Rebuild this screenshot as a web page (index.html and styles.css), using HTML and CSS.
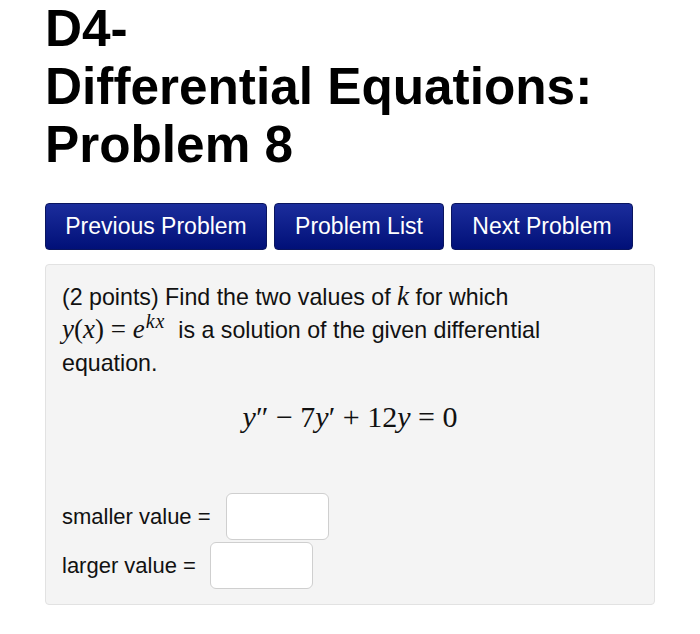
FILE: index.html
```html
<!DOCTYPE html>
<html>
<head>
<meta charset="utf-8">
<link rel="stylesheet" href="styles.css">
</head>
<body>
<h1 class="title">D4-<br>Differential Equations:<br>Problem 8</h1>
<div class="nav">
  <a class="btn btn-prev">Previous Problem</a>
  <a class="btn btn-list">Problem List</a>
  <a class="btn btn-next">Next Problem</a>
</div>
<div class="panel">
  <p class="intro">(2 points) Find the two values of <span class="m">k</span> for which<br><span class="m">y</span><span class="mr">(</span><span class="m">x</span><span class="mr">) = </span><span class="m">e<sup class="sup">kx</sup></span>&nbsp; is a solution of the given differential<br>equation.</p>
  <div class="eq"><span class="m">y</span><span class="mr">″ − 7</span><span class="m">y</span><span class="mr">′ + 12</span><span class="m">y</span><span class="mr"> = 0</span></div>
  <div class="answers">
    <div class="row row-small"><span class="lbl">smaller value =</span><span class="inp"></span></div>
    <div class="row row-large"><span class="lbl">larger value =</span><span class="inp"></span></div>
  </div>
</div>
</body>
</html>
```
FILE: styles.css
```css
html, body {
  margin: 0;
  padding: 0;
  background: #ffffff;
}
body {
  padding: 0 45px;
  font-family: "Liberation Sans", Arial, sans-serif;
  color: #111;
}
.title {
  margin: 0;
  font-size: 51.3px;
  line-height: 58px;
  font-weight: bold;
  color: #000;
}
.nav {
  display: flex;
  gap: 7px;
  margin-top: 29px;
}
.btn {
  display: flex;
  align-items: center;
  justify-content: center;
  height: 47px;
  box-sizing: border-box;
  border-radius: 4px;
  background: linear-gradient(#1b2d9c, #011078);
  border: 1px solid #0a1560;
  color: #fff;
  font-size: 23px;
  padding-bottom: 1px;
}
.btn-prev { width: 222px; }
.btn-list { width: 170px; }
.btn-next { width: 182px; }
.panel {
  margin-top: 14px;
  width: 610px;
  box-sizing: border-box;
  background: #f4f4f4;
  border: 1px solid #e2e2e2;
  border-radius: 4px;
  padding: 16px 16px 15px 16px;
}
.intro {
  margin: 0;
  font-size: 23.2px;
  line-height: 33px;
}
.m {
  font-family: "Liberation Serif", "Times New Roman", serif;
  font-style: italic;
  font-size: 27px;
}
.mr {
  font-family: "Liberation Serif", "Times New Roman", serif;
  font-size: 27px;
}
.sup {
  font-size: 20px;
  vertical-align: 0;
  position: relative;
  top: -10px;
  margin-left: 1px;
  letter-spacing: 1px;
}
.intro .m, .intro .mr { line-height: 0; }
.eq {
  text-align: center;
  margin-top: 22px;
  line-height: 30px;
}
.eq .m, .eq .mr { font-size: 30px; }
.answers {
  margin-top: 56px;
  display: flex;
  flex-direction: column;
  gap: 2px;
}
.row {
  display: flex;
  align-items: center;
  gap: 15px;
  font-size: 22px;
}
.row-large { gap: 14px; }
.inp {
  display: block;
  width: 103px;
  height: 47px;
  box-sizing: border-box;
  background: #fff;
  border: 1px solid #cfcfcf;
  border-radius: 6px;
}
```
